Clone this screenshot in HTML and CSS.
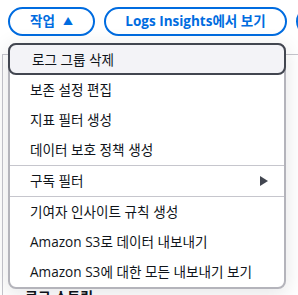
FILE: index.html
```html
<!DOCTYPE html>
<html lang="ko">
<head>
<meta charset="utf-8">
<link rel="stylesheet" href="styles.css">
</head>
<body>
<div class="page">
  <div class="toolbar">
    <button class="btn btn-actions">작업 <span class="caret">▲</span></button>
    <button class="btn btn-insights">Logs Insights에서 보기</button>
    <button class="btn btn-more" aria-label="더 보기"></button>
  </div>
  <div class="panel">
    <div class="panel-text">로그 스트림</div>
  </div>
  <ul class="menu">
    <li class="item active">로그 그룹 삭제</li>
    <li class="item">보존 설정 편집</li>
    <li class="item">지표 필터 생성</li>
    <li class="item">데이터 보호 정책 생성</li>
    <li class="item sub">구독 필터
      <svg class="arrow" width="8" height="10" viewBox="0 0 8 10"><path d="M0 0 L8 5 L0 10 Z" fill="#424650"/></svg>
    </li>
    <li class="item group">기여자 인사이트 규칙 생성</li>
    <li class="item">Amazon S3로 데이터 내보내기</li>
    <li class="item">Amazon S3에 대한 모든 내보내기 보기</li>
  </ul>
</div>
</body>
</html>
```

FILE: styles.css
```css
* { box-sizing: border-box; }
html, body {
  margin: 0;
  padding: 0;
  background: #ffffff;
  font-family: "Open Sans", "Noto Sans CJK KR", sans-serif;
  color: #0f141a;
}
.page {
  position: relative;
  width: 298px;
  height: 295px;
  overflow: hidden;
}
.toolbar {
  display: flex;
  gap: 9px;
  padding: 7px 0 0 8px;
  white-space: nowrap;
}
.btn {
  flex: none;
  height: 29px;
  border: 2px solid #006ce0;
  border-radius: 20px;
  background: #fff;
  color: #006ce0;
  font-family: "Open Sans", "Noto Sans CJK KR", sans-serif;
  font-weight: 700;
  font-size: 13.5px;
  line-height: 25px;
  padding: 0 12px;
  display: flex;
  align-items: center;
  justify-content: center;
}
.btn-actions { width: 87px; gap: 8px; }
.caret { font-size: 10px; }
.btn-insights { width: 183px; }
.btn-more { width: 60px; }
.panel {
  margin: 18px 0 0 2px;
  height: 260px;
  border-top: 1px solid #c6c6cd;
  border-left: 1px solid #c6c6cd;
  position: relative;
}
.panel-text {
  padding: 231px 0 0 22px;
  font-size: 14px;
  font-weight: 700;
}
.menu {
  position: absolute;
  top: 43px;
  left: 8px;
  width: 278px;
  margin: 0;
  padding: 0;
  list-style: none;
  background: #fff;
  border: 2px solid #b4b4bb;
  border-radius: 8px;
  box-shadow: 0 4px 20px 1px rgba(0, 7, 22, 0.10);
  display: flex;
  flex-direction: column;
}
.item {
  height: 30px;
  display: flex;
  align-items: center;
  padding: 0 20px;
  font-size: 13.6px;
  line-height: 20px;
  white-space: nowrap;
}
.item.active {
  margin: -2px -2px 0;
  height: 32px;
  padding-left: 22px;
  padding-top: 1px;
  background: #f3f3f7;
  border: 2px solid #424650;
  border-radius: 8px;
}
.item.sub {
  border-top: 1px solid #c6c6cd;
  height: 32px;
  border-bottom: 1px solid #c6c6cd;
  justify-content: space-between;
  padding-right: 16px;
}
.arrow { flex: none; }
```
